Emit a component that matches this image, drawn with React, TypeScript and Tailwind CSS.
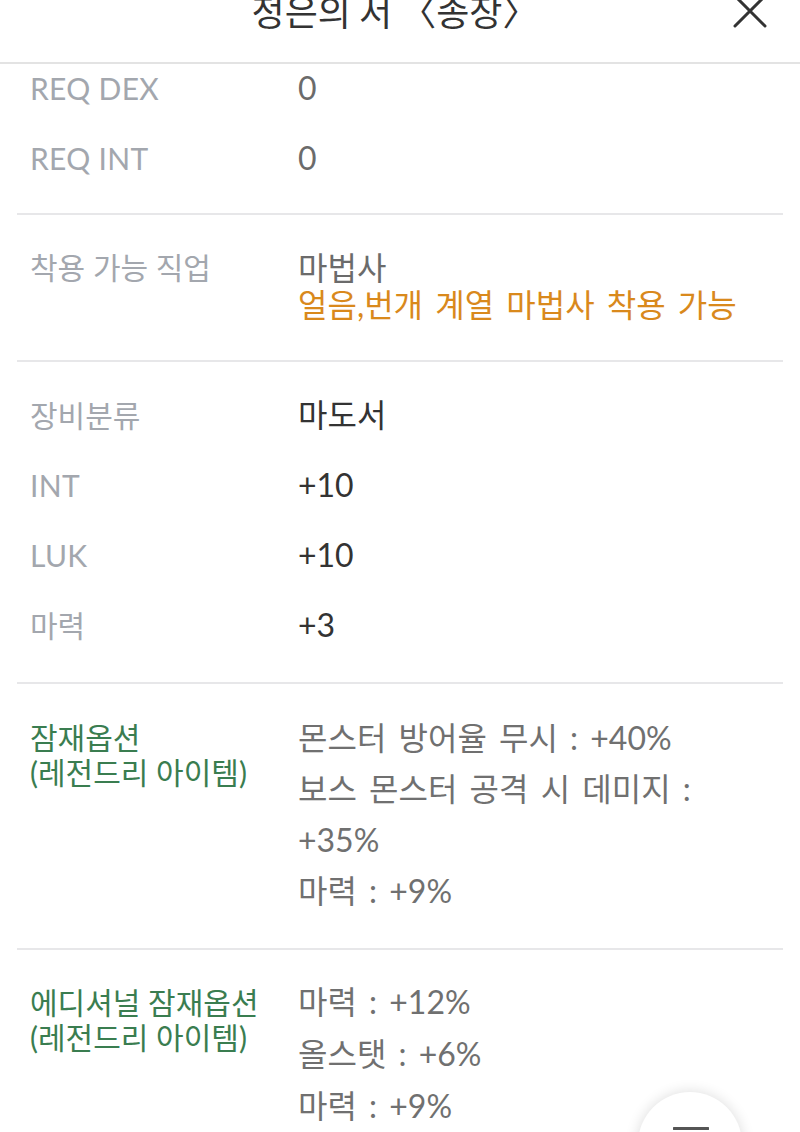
import React from 'react';

type Stat = { label: string; value: string; latin?: boolean; dark?: boolean };

const reqRows: Stat[] = [
  { label: 'REQ DEX', value: '0', latin: true },
  { label: 'REQ INT', value: '0', latin: true },
];

const statRows: Stat[] = [
  { label: '장비분류', value: '마도서', dark: true },
  { label: 'INT', value: '+10', latin: true, dark: true },
  { label: 'LUK', value: '+10', latin: true, dark: true },
  { label: '마력', value: '+3', dark: true },
];

function Divider() {
  return <div className="mx-[17px] h-[2px] bg-[#e7e7e9]" />;
}

function StatRow({ label, value, latin, dark }: Stat) {
  return (
    <div className="flex h-[70px] items-center pl-[30px]">
      <div className={`w-[268px] shrink-0 text-[30px] text-[#a3a7ae] ${latin ? 'tracking-[0.01em]' : ''}`}>
        {label}
      </div>
      <div className={`text-[32px] ${dark ? 'text-[#333333]' : 'text-[#6b6b6b]'}`}>{value}</div>
    </div>
  );
}

function OptionBlock({ title, lines, tall }: { title: string; lines: string[]; tall?: boolean }) {
  return (
    <div className="flex items-start pl-[30px]">
      <div className={`w-[268px] shrink-0 text-[30px] leading-[35px] text-[#3a7d50] ${tall ? 'mt-[8.5px]' : 'mt-[8px]'}`}>
        <div className="whitespace-nowrap">{title}</div>
        <div className="whitespace-nowrap">(레전드리 아이템)</div>
      </div>
      <div className={`text-[32px] text-[#707070] [word-spacing:4px] ${tall ? 'leading-[52px]' : 'leading-[51px]'}`}>
        {lines.map((l, i) => (
          <div key={i} className="whitespace-nowrap">
            {l}
          </div>
        ))}
      </div>
    </div>
  );
}

export default function App() {
  return (
    <div className="relative h-[1132px] w-[800px] overflow-hidden bg-white font-['Lato','Noto_Sans_CJK_KR',sans-serif]">
      {/* scrolled content */}
      <div className="pt-[53px]">
        <div className="pb-[20px]">
          {reqRows.map((r) => (
            <StatRow key={r.label} {...r} />
          ))}
        </div>
        <Divider />

        <div className="flex items-start pb-[37px] pl-[30px] pt-[34px] leading-[37px]">
          <div className="w-[268px] shrink-0 text-[30px] text-[#a3a7ae]">착용 가능 직업</div>
          <div className="text-[32px] [word-spacing:4px]">
            <div className="text-[#6b6b6b]">마법사</div>
            <div className="whitespace-nowrap text-[#d9891c]">얼음,번개 계열 마법사 착용 가능</div>
          </div>
        </div>
        <Divider />

        <div className="pb-[22px] pt-[18px]">
          {statRows.map((r) => (
            <StatRow key={r.label} {...r} />
          ))}
        </div>
        <Divider />

        <div className="pb-[32px] pt-[28px]">
          <OptionBlock
            title="잠재옵션"
            lines={['몬스터 방어율 무시 : +40%', '보스 몬스터 공격 시 데미지 :', '+35%', '마력 : +9%']}
          />
        </div>
        <Divider />

        <div className="pb-[20px] pt-[26px]">
          <OptionBlock tall title="에디셔널 잠재옵션" lines={['마력 : +12%', '올스탯 : +6%', '마력 : +9%']} />
        </div>
      </div>

      {/* sticky header */}
      <div className="absolute left-0 top-0 h-[64px] w-[800px] overflow-hidden border-b-2 border-[#e3e3e3] bg-white">
        <div className="-mt-[8px] pr-[10px] text-center font-['Noto_Sans_CJK_KR',sans-serif] text-[36px] leading-[36px] text-[#333333]">
          정은의 서 〈종장〉
        </div>
        <svg className="absolute left-[733px] top-[-5px]" width="34" height="33" viewBox="0 0 34 33">
          <path d="M2 1 L32 31 M32 1 L2 31" stroke="#333" strokeWidth="3" strokeLinecap="round" fill="none" />
        </svg>
      </div>

      {/* back to top button */}
      <div className="absolute left-[638px] top-[1092px] h-[104px] w-[104px] rounded-full bg-white shadow-[0_0_14px_rgba(0,0,0,0.14)]">
        <svg className="absolute left-[35px] top-[33px]" width="36" height="40" viewBox="0 0 36 40">
          <path d="M1 3.5 H35" stroke="#555" strokeWidth="3" strokeLinecap="round" />
          <path d="M18 12 V38 M8 22 L18 12 L28 22" stroke="#555" strokeWidth="3" strokeLinecap="round" fill="none" />
        </svg>
      </div>
    </div>
  );
}
